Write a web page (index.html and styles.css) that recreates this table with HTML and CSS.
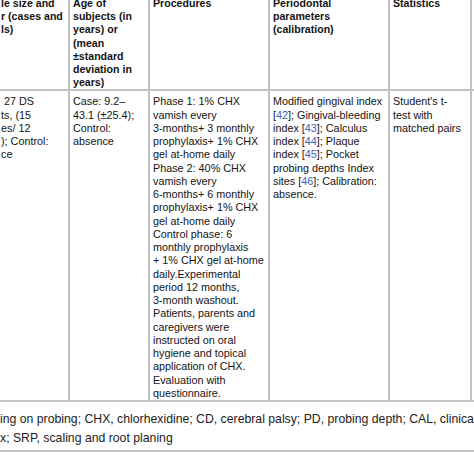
FILE: index.html
```html
<!DOCTYPE html>
<html>
<head>
<meta charset="utf-8">
<link rel="stylesheet" href="styles.css">
</head>
<body>
<div class="table">
  <div class="row head">
    <div class="cell c1">le size and<br>r (cases and<br>ls)</div>
    <div class="cell">Age of<br>subjects (in<br>years) or<br>(mean<br>±standard<br>deviation in<br>years)</div>
    <div class="cell">Procedures</div>
    <div class="cell">Periodontal<br>parameters<br>(calibration)</div>
    <div class="cell">Statistics</div>
    <div class="cell"></div>
  </div>
  <div class="row body-row">
    <div class="cell c1"><span class="ind">27 DS</span><br>ts, (15<br>es/ 12<br>); Control:<br>ce</div>
    <div class="cell">Case: 9.2–<br>43.1 (±25.4);<br>Control:<br>absence</div>
    <div class="cell">Phase 1: 1% CHX<br>vamish every<br>3-months+ 3 monthly<br>prophylaxis+ 1% CHX<br>gel at-home daily<br>Phase 2: 40% CHX<br>vamish every<br>6-months+ 6 monthly<br>prophylaxis+ 1% CHX<br>gel at-home daily<br>Control phase: 6<br>monthly prophylaxis<br>+ 1% CHX gel at-home<br>daily.Experimental<br>period 12 months,<br>3-month washout.<br>Patients, parents and<br>caregivers were<br>instructed on oral<br>hygiene and topical<br>application of CHX.<br>Evaluation with<br>questionnaire.</div>
    <div class="cell">Modified gingival index<br>[<a class="ref">42</a>]; Gingival-bleeding<br>index [<a class="ref">43</a>]; Calculus<br>index [<a class="ref">44</a>]; Plaque<br>index [<a class="ref">45</a>]; Pocket<br>probing depths Index<br>sites [<a class="ref">46</a>]; Calibration:<br>absence.</div>
    <div class="cell">Student's t-<br>test with<br>matched pairs</div>
    <div class="cell"></div>
  </div>
  <div class="foot">ing on probing; CHX, chlorhexidine; CD, cerebral palsy; PD, probing depth; CAL, clinical<br>x; SRP, scaling and root planing</div>
</div>
</body>
</html>
```
FILE: styles.css
```css
html, body {
  margin: 0;
  padding: 0;
  background: #fff;
}
body {
  width: 474px;
  height: 474px;
  overflow: hidden;
  font-family: "Liberation Sans", Arial, sans-serif;
  color: #141414;
}
.table {
  width: 520px;
  margin-top: -3px;
}
.row {
  display: grid;
  grid-template-columns: 68px 80px 120px 120px 82px 50px;
  border-bottom: 2px solid #c2c2c2;
}
.cell {
  padding: 0 4px 0 3px;
  border-left: 2px solid #c2c2c2;
  white-space: nowrap;
  overflow: hidden;
}
.cell.c1 {
  border-left: none;
  padding-left: 1px;
}
.head .cell {
  font-weight: bold;
  font-size: 10.6px;
  line-height: 13.2px;
}
.body-row .cell {
  font-size: 10.8px;
  line-height: 13.25px;
  padding-top: 4px;
}
.ind {
  padding-left: 3px;
}
.ref {
  color: #3d5fb5;
  text-decoration: none;
}
.foot {
  font-size: 12.25px;
  line-height: 19px;
  color: #222;
  padding: 8px 0 2px 0;
  white-space: nowrap;
  border-bottom: 2px solid #c2c2c2;
  width: 474px;
  overflow: hidden;
}
```
